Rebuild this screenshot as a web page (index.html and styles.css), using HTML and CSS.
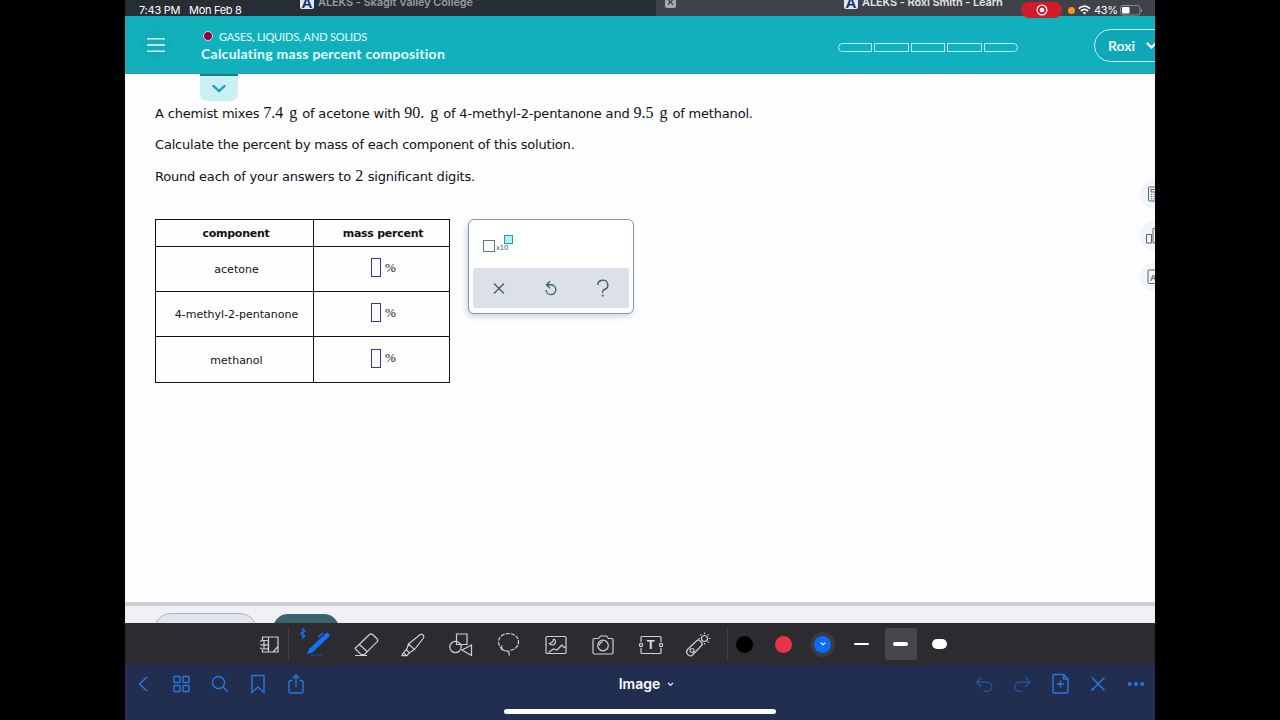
FILE: index.html
```html
<!DOCTYPE html>
<html lang="en">
<head>
    <meta charset="UTF-8">
    <meta name="viewport" content="width=device-width, initial-scale=1.0">
    <title>Calculating mass percent composition</title>
    <link rel="stylesheet" href="styles.css">
</head>
<body>
    <div class="screen">
        <div class="tabs">
            <div class="tab">
                <span class="time">7:43 PM</span>
                <span class="date">Mon Feb 8</span>
                <span class="logo">A</span>
                <span class="tab-title">ALEKS - Skagit Valley College</span>
            </div>
            <div class="tab tab-active">
                <svg class="close" width="11" height="11" viewBox="0 0 11 11"><rect y="-3" width="11" height="11" rx="2" fill="#a5a8ad"/><path d="M3 -.5l5 5M8 -.5l-5 5" stroke="#3f434a" stroke-width="1.3"/></svg>
                <span class="logo">A</span>
                <span class="tab-title title-active">ALEKS - Roxi Smith - Learn</span>
                <div class="record">
                    <svg width="12" height="12" viewBox="0 0 12 12"><circle cx="6" cy="6" r="4.9" fill="none" stroke="#fff" stroke-width="1.2"/><circle cx="6" cy="6" r="2.3" fill="#fff"/></svg>
                </div>
                <span class="mic-dot"></span>
                <svg class="wifi" width="13" height="10" viewBox="0 0 13 10" fill="none" stroke="#fff" stroke-width="1.7"><path d="M.8 3.7q5.7-5 11.4 0M2.9 6q3.6-3.1 7.2 0"/><path d="M6.5 9.4L4.7 7.6q1.8-1.3 3.6 0z" fill="#fff" stroke="none"/></svg>
                <span class="battery-text">43%</span>
                <svg class="battery" width="23" height="11" viewBox="0 0 23 11"><rect x=".5" y=".5" width="19.5" height="9.5" rx="2.5" fill="none" stroke="#8d9095"/><rect x="2" y="2" width="7.5" height="6.5" rx="1" fill="#fff"/><path d="M21.5 4v3" stroke="#8d9095"/></svg>
            </div>
        </div>

        <div class="header">
            <div class="menu">
                <svg width="18" height="16" viewBox="0 0 18 16" stroke="#e4fbfc" stroke-width="1.5"><path d="M0 1.7h18M0 8h18M0 14.3h18"/></svg>
            </div>
            <div class="heading">
                <div class="topic"><span class="dot"></span><span class="topic-text">GASES, LIQUIDS, AND SOLIDS</span></div>
                <div class="title">Calculating mass percent composition</div>
            </div>
            <div class="progress"><i></i><i></i><i></i><i></i><i></i></div>
            <div class="user">
                <span>Roxi</span>
                <svg width="11" height="8" viewBox="0 0 11 8"><path d="M1.5 1.5l4 4 4-4" fill="none" stroke="#fff" stroke-width="2.2" stroke-linecap="round"/></svg>
            </div>
        </div>

        <div class="page">
            <div class="question">
                <div class="pulldown">
                    <svg width="16" height="11" viewBox="0 0 16 11"><path d="M2.5 3L8 8.2 13.5 3" fill="none" stroke="#13a5b1" stroke-width="2.4" stroke-linecap="round"/></svg>
                </div>
                <p class="line1">A chemist mixes <span class="num">7.4&nbsp;</span><span class="num unit">g</span> of acetone with <span class="num">90.&nbsp;</span><span class="num unit">g</span> of 4-methyl-2-pentanone and <span class="num">9.5&nbsp;</span><span class="num unit">g</span> of methanol.</p>
                <p>Calculate the percent by mass of each component of this solution.</p>
                <p>Round each of your answers to <span class="num two">2</span> significant digits.</p>
                <div class="work">
                    <table>
                        <tr><th class="col-name">component</th><th>mass percent</th></tr>
                        <tr><td>acetone</td><td class="answer"><div><span class="box"></span>%</div></td></tr>
                        <tr><td>4-methyl-2-pentanone</td><td class="answer"><div><span class="box"></span>%</div></td></tr>
                        <tr class="last"><td>methanol</td><td class="answer"><div><span class="box"></span>%</div></td></tr>
                    </table>
                    <div class="palette">
                        <div class="sci">
                            <span class="mantissa"></span><span class="x10">x10</span><span class="exponent"></span>
                        </div>
                        <div class="keys">
                            <svg width="20" height="20" viewBox="0 0 20 20"><path d="M5 5.5l10 10M15 5.5l-10 10"/></svg>
                            <svg width="20" height="20" viewBox="0 0 20 20"><path d="M5.5 6.8h4.800a4.900 4.900 0 1 1-5.300 5.200M9 3.3L5.5 6.8l3.5 3.4"/></svg>
                            <svg width="20" height="20" viewBox="0 0 20 20"><path d="M4.800 7a5 4.800 0 1 1 6.700 4.500q-1.800.6-1.800 2v1.200"/><circle cx="9.700" cy="17.600" r=".4"/></svg>
                        </div>
                    </div>
                </div>
            </div>
            <div class="side">
                <div class="side-btn"><svg width="16" height="16" viewBox="0 0 16 16"><rect x="1.5" y="1" width="13" height="14" rx="1"/><path d="M4 3.5h8v2.500H4z"/><path d="M4 8.5h8M4 10.700h8M4 12.900h8" stroke-dasharray="1.3 1.3"/></svg></div>
                <div class="side-btn"><svg width="16" height="16" viewBox="0 0 16 16"><path d="M-.5 6.500h5V15h-5zM6 .5h5V15H6z"/></svg></div>
                <div class="side-btn"><svg width="16" height="16" viewBox="0 0 16 16"><rect x="1" y="1" width="14" height="13.5" rx="1"/></svg><span class="side-a">A</span></div>
            </div>
        </div>

        <div class="footer">
            <div class="btn-explain"></div>
            <div class="btn-check"></div>
        </div>

        <div class="toolbar">
            <svg class="tool-notes" width="28" height="28" viewBox="0 0 28 28"><path d="M7.5 10V7h15.500v15H7.500v-2M18 22l5-5.500M13.500 7v15"/><path d="M5.500 12q0-1.500 1.500-1.500h4.500q2 0 2 2v4.500q0 2-2 2H7q-1.500 0-1.500-1.500M5.500 14.800h8M9 10.500V19"/></svg>
            <div class="tools">
                <svg class="pen" width="38" height="36" viewBox="0 0 38 36">
                    <path d="M12.5 26L28 11.500" stroke="#0f74f6" stroke-width="5" stroke-linecap="round"/><path d="M10.500 24.500L7.500 30.500l6-2.500z" fill="#0f74f6" stroke="none"/><path d="M19 13.500l5-4.500" stroke="#0f74f6" stroke-width="1.5"/><path d="M11 31h12" stroke="#0c4ca0"/><path d="M1.500 8l4.500 4-2.300 2.200V5L6 7.200 1.500 11.200" stroke="#0f74f6" stroke-width="1.1"/>
                </svg>
                <svg width="28" height="28" viewBox="0 0 28 28"><path d="M4.500 16L17.500 3.500q1.500-1.400 3 0l4.500 4.300q1.500 1.500 0 3L12.500 23.500H9L3.500 18q-1-1 1-2zM7.500 13.500l8 7.500M3 24.500h12"/></svg>
                <svg width="28" height="28" viewBox="0 0 28 28"><path d="M9.500 13L21 3.700q1.500-1.200 3 .3t.5 3L15.500 18.500M9.500 13l-2 6 3 2.800 5-3.300zM7.500 18l-3 4 3.500 2.700 2.500-2.900M4 22l-1 2.700h5"/></svg>
                <svg width="28" height="28" viewBox="0 0 28 28"><path d="M9.500 3h10.500v10.500H9.500z"/><circle cx="8.500" cy="16" r="5.7"/><path d="M24.500 14v10.500L15 19z"/></svg>
                <svg width="28" height="28" viewBox="0 0 28 28"><path d="M8.500 19Q4.500 15 4.500 11C4.500 6 9 2.500 14.500 2.500S24.500 6 24.500 11s-4.500 8.500-10 8.500" stroke-dasharray="4 1.2"/><path d="M8 14.500q-1.500 5 4.500 5.500 3.500.5 2.500 4.500M12.500 20l3 1.500"/></svg>
                <svg width="28" height="28" viewBox="0 0 28 28"><rect x="4" y="5.500" width="20" height="17" rx="1"/><path d="M6.500 21.500l5-3.500 3.500 1 5-5 2 2.500 2-1M11.500 8q0 3.500-4 4.500 3 3 5.500 0Q14.500 9 11.500 8"/></svg>
                <svg width="28" height="28" viewBox="0 0 28 28"><path d="M5.500 7.500h4l2-2.500h6l2 2.500h3.500q1 0 1 1v13q0 1.500-1.500 1.500h-17Q4 23 4 21.500V9q0-1.500 1.500-1.500z"/><circle cx="14" cy="14.500" r="5.300"/><path d="M10.500 14.500q0-3.500 3.500-3.500"/></svg>
                <div class="text-tool">
                    <svg width="28" height="28" viewBox="0 0 28 28"><path d="M4 11V6.500Q4 5.500 5 5.500h18q1 0 1 1V11M4 17v4.500q0 1 1 1h18q1 0 1-1V17"/><circle cx="4" cy="14" r="1.6"/><circle cx="24" cy="14" r="1.6"/></svg>
                    <b>T</b>
                </div>
                <svg width="28" height="28" viewBox="0 0 28 28"><path d="M3.500 18.500L13 9.500q1.500-1.200 3 .3l1.500 1.700q1.500 1.500 0 3L8.500 24q-2 2-4.200-.2l-.8-.8q-2-2.200 0-4.500z"/><circle cx="8" cy="19.500" r="2"/><circle cx="20.500" cy="7.500" r="3"/><path d="M20.500 1.500v1.500M20.500 12v1.500M26.500 7.500H25M16 7.500h-1.500M16.300 3.300l1 1M24.700 3.300l-1 1M24.700 11.700l-1-1"/></svg>
            </div>
            <div class="swatches">
                <span><i class="color black"></i></span>
                <span><i class="color red"></i></span>
                <span><i class="color blue"><svg width="6" height="4" viewBox="0 0 6 4"><path d="M.7.7L3 2.700 5.300.7" fill="none" stroke="#fff" stroke-width="1.1"/></svg></i></span>
                <span><i class="stroke thin"></i></span>
                <span class="selected"><i class="stroke medium"></i></span>
                <span><i class="stroke thick"></i></span>
            </div>
        </div>

        <div class="bottombar">
            <div class="nav">
                <svg width="28" height="28" viewBox="0 0 28 28"><path d="M18 7l-7.500 7 7.500 7"/></svg>
                <svg width="28" height="28" viewBox="0 0 28 28"><rect x="7" y="6.5" width="6" height="6" rx=".6"/><rect x="16" y="6.5" width="6" height="6" rx=".6"/><rect x="7" y="15.5" width="6" height="6" rx=".6"/><rect x="16" y="15.5" width="6" height="6" rx=".6"/></svg>
                <svg width="28" height="28" viewBox="0 0 28 28"><circle cx="13.5" cy="12.5" r="6"/><path d="M18 17l4.800 4.700"/></svg>
                <svg width="28" height="28" viewBox="0 0 28 28"><path d="M9 5.500h12v17l-6-5.500-6 5.500z"/></svg>
                <svg width="28" height="28" viewBox="0 0 28 28"><path d="M11.500 10.500h-2Q8 10.500 8 12v9.500Q8 23 9.500 23h11q1.500 0 1.500-1.500V12q0-1.500-1.500-1.500h-2M15 17V5.500M11.500 8.500L15 5l3.500 3.500"/></svg>
            </div>
            <div class="doc-name">Image<svg width="7" height="5" viewBox="0 0 7 5"><path d="M1 1l2.500 2.300L6 1" fill="none" stroke="#fff" stroke-width="1.1"/></svg></div>
            <div class="nav nav-right">
                <svg class="dim" width="28" height="28" viewBox="0 0 28 28"><path d="M11.500 7L6.500 12l5 5M6.500 12h10.500a4.700 4.700 0 0 1 0 9.400h-3.500"/></svg>
                <svg class="dim" width="28" height="28" viewBox="0 0 28 28"><path d="M17 7l5 5-5 5M22 12H11.500a4.700 4.700 0 0 0 0 9.400H15"/></svg>
                <svg width="28" height="28" viewBox="0 0 28 28"><path d="M8.500 4.500h9L22 9v12.500q0 1.500-1.500 1.500h-12Q7 23 7 21.500V6q0-1.500 1.500-1.500zM17.500 4.500V9H22M14.500 10.500v7M11 14h7"/></svg>
                <svg width="28" height="28" viewBox="0 0 28 28"><path d="M8 7.500l12.500 13"/><path d="M20.500 7.500L9 19" stroke-width="1.5"/><path d="M9.500 18.500l-2 2" stroke-width="2.2"/></svg>
                <svg width="28" height="28" viewBox="0 0 28 28"><g fill="#2878dc" stroke="none"><circle cx="7.7" cy="14" r="1.9"/><circle cx="14" cy="14" r="1.9"/><circle cx="20.3" cy="14" r="1.9"/></g></svg>
            </div>
            <div class="home-bar"></div>
        </div>
    </div>
</body>
</html>
```
FILE: styles.css
```css
body {
    margin: 0;
    background-color: #000;
    font-family: "DejaVu Sans", sans-serif;
}
svg {
    display: block;
    flex: none;
}
p {
    margin: 0;
}
.screen {
    width: 1030px;
    height: 720px;
    margin: 0 auto;
    display: flex;
    flex-direction: column;
    overflow: hidden;
    background-color: #fefdff;
}

/* browser tabs and status icons */
.tabs {
    display: flex;
    height: 16px;
    font-family: Inter, sans-serif;
    font-size: 11px;
    color: #fff;
    white-space: nowrap;
}
.tab {
    display: flex;
    width: 531px;
    height: 16px;
    box-sizing: border-box;
    background-color: #272d34;
}
.tab-active {
    width: 499px;
    background-color: #3f4349;
}
.time {
    width: 50px;
    margin-left: 14px;
    line-height: 21px;
    letter-spacing: -0.25px;
}
.date {
    width: 111px;
    line-height: 21px;
    letter-spacing: -0.3px;
}
.logo {
    width: 14px;
    height: 9px;
    margin-right: 4px;
    overflow: hidden;
    background-color: #dfe6f4;
    color: #17306f;
    font: bold 15px/6px "Liberation Sans", sans-serif;
    text-align: center;
    border-radius: 0 0 2px 2px;
}
.tab-title {
    line-height: 5px;
    font-weight: 600;
    letter-spacing: -0.1px;
    color: #989ba0;
}
.title-active {
    width: 159px;
    color: #e3e4e6;
}
.close {
    margin-left: 9px;
    margin-right: 168px;
}
.record {
    display: flex;
    align-items: center;
    justify-content: center;
    width: 41px;
    height: 16px;
    margin-top: 2px;
    border-radius: 8px;
    background-color: #d21c2c;
    z-index: 1;
}
.mic-dot {
    width: 7px;
    height: 7px;
    margin: 7px 3px 0 6px;
    border-radius: 50%;
    background-color: #f6961e;
}
.wifi {
    margin-top: 5px;
}
.battery-text {
    width: 26px;
    margin-left: 3px;
    line-height: 21px;
    letter-spacing: -0.3px;
}
.battery {
    margin-top: 5px;
}

/* teal header */
.header {
    display: flex;
    height: 57px;
    background-color: #10b1bd;
    border-bottom: 1px solid #2aa3ae;
    color: #e9fcfd;
    font-family: Lato, sans-serif;
}
.menu {
    display: flex;
    align-items: center;
    justify-content: center;
    width: 30px;
    height: 30px;
    margin: 14px 30px 0 16px;
    border-radius: 50%;
    background-color: #10acb9;
}
.heading {
    width: 637px;
    padding-top: 12px;
}
.topic {
    display: flex;
    align-items: center;
    height: 16px;
    padding-left: 2px;
    font-size: 11px;
    letter-spacing: -0.15px;
    white-space: nowrap;
}
.dot {
    width: 8px;
    height: 8px;
    margin-right: 6px;
    border: 1px solid #e9d5e0;
    border-radius: 50%;
    background-color: #8a0042;
}
.title {
    font-size: 14px;
    font-weight: bold;
    line-height: 20px;
    letter-spacing: 0.26px;
}
.progress {
    display: flex;
    gap: 2px;
    width: 180px;
    height: 9px;
    margin-top: 27px;
}
.progress i {
    flex: 1;
    box-sizing: border-box;
    border: 1px solid #b9f1f4;
}
.progress i:first-child {
    border-radius: 5px 0 0 5px;
}
.progress i:last-child {
    border-radius: 0 5px 5px 0;
}
.user {
    display: flex;
    align-items: center;
    flex: none;
    width: 90px;
    height: 33px;
    margin: 13px -40px 0 76px;
    padding-left: 13px;
    box-sizing: border-box;
    border: 1px solid #c9f3f5;
    border-radius: 17px;
    background-color: #10a8b7;
    font-size: 14px;
    font-weight: bold;
}
.user span {
    width: 38px;
    margin-top: -1px;
}

/* question */
.page {
    display: flex;
    justify-content: space-between;
    height: 528px;
}
.question {
    padding-left: 30px;
    font-size: 13px;
    line-height: 31.5px;
    letter-spacing: -0.2px;
    color: #111;
    white-space: nowrap;
}
.pulldown {
    display: flex;
    align-items: center;
    justify-content: center;
    width: 38px;
    height: 25px;
    margin-left: 45px;
    margin-bottom: -3.5px;
    border-top: 2px solid #167f8c;
    border-radius: 0 0 7px 7px;
    background-color: #caf0f3;
}
.line1 {
    letter-spacing: -0.18px;
}
.num {
    font-family: "Liberation Serif", serif;
    font-size: 16px;
    line-height: 20px;
    letter-spacing: 0;
}
.unit {
    margin-left: 2px;
    margin-right: 1px;
}
.two {
    margin: 0 0.5px;
}
.work {
    display: flex;
    align-items: flex-start;
    gap: 18px;
    margin-top: 26.5px;
}
table {
    width: 295px;
    border-collapse: collapse;
    table-layout: fixed;
    font-size: 11px;
    line-height: 14px;
    letter-spacing: 0;
    text-align: center;
}
th, td {
    height: 41px;
    padding: 3px 0 0 4px;
    border: 1px solid #111;
}
th {
    height: 24px;
    padding: 2px 0 0 3px;
    letter-spacing: -0.25px;
}
.last td {
    height: 42px;
}
.col-name {
    width: 154px;
}
.answer {
    font-family: "Liberation Serif", serif;
    font-size: 13px;
}
.answer div {
    display: flex;
    align-items: center;
    justify-content: center;
    gap: 4px;
    margin-top: -5px;
}
.box {
    width: 8px;
    height: 17px;
    border: 1px solid #3a2fb5;
}
.palette {
    display: flex;
    flex-direction: column;
    justify-content: space-between;
    width: 166px;
    height: 95px;
    padding: 14px 4px 5px;
    box-sizing: border-box;
    border: 1px solid #7d9ba3;
    border-radius: 6px;
    background-color: #fff;
    box-shadow: -2px 3px 5px rgba(90, 110, 150, 0.25);
}
.sci {
    display: flex;
    align-items: flex-end;
    height: 18px;
    padding-left: 10px;
}
.mantissa {
    width: 10px;
    height: 10px;
    border: 1px solid #5c7a83;
}
.x10 {
    width: 12px;
    margin: 0 -4px -1px 1px;
    color: #3e5f69;
    font: 7px/10px "DejaVu Sans", sans-serif;
    letter-spacing: -0.3px;
}
.exponent {
    width: 7px;
    height: 7px;
    margin-bottom: 8px;
    border: 1px solid #1fa0a9;
    background-color: #b8edf0;
}
.keys {
    display: flex;
    align-items: center;
    justify-content: space-around;
    height: 40px;
    border-radius: 3px;
    background-color: #dce1e8;
}
.keys svg {
    fill: none;
    stroke: #3d626d;
    stroke-width: 1.4;
}
.side {
    display: flex;
    flex-direction: column;
    gap: 11.5px;
    width: 15px;
    padding-top: 105px;
}
.side-btn {
    position: relative;
    display: flex;
    align-items: center;
    width: 30px;
    height: 30px;
    padding-left: 7px;
    box-sizing: border-box;
    border-radius: 50%;
    background-color: #f3f5f9;
}
.side-btn svg {
    fill: none;
    stroke: #4b6972;
    overflow: visible;
}
.side-a {
    position: absolute;
    left: 10px;
    top: 11px;
    font: bold 9px/10px "Liberation Sans", sans-serif;
    color: #58747c;
}
.footer {
    display: flex;
    gap: 16px;
    flex: none;
    height: 21px;
    padding: 7px 0 0 29px;
    box-sizing: border-box;
    border-top: 4px solid #cdced6;
    background-color: #f0f0f5;
    overflow: hidden;
}
.btn-explain {
    width: 101px;
    height: 34px;
    border: 1px solid #aeb3bd;
    border-radius: 17px;
    background-color: #e1e5ed;
}
.btn-check {
    width: 66px;
    height: 34px;
    margin-top: 1px;
    border-radius: 15px;
    background-color: #38666c;
}

/* drawing tools */
.toolbar {
    display: flex;
    align-items: center;
    height: 42px;
    background-color: #2d2b2f;
    z-index: 1;
}
.toolbar svg {
    fill: none;
    stroke: #d0d0d2;
    stroke-width: 1.2;
}
.tool-notes {
    margin-left: 130px;
    margin-right: 5px;
}
.tools {
    display: grid;
    grid-template-columns: repeat(9, 47.5px);
    align-items: center;
    justify-items: center;
    width: 440px;
    height: 32px;
    padding: 1px 0 0 5.5px;
    box-sizing: border-box;
    border-left: 1px solid #424146;
    border-right: 1px solid #424146;
}
.tools .pen {
    margin-top: -5px;
}
.text-tool {
    position: relative;
}
.text-tool b {
    position: absolute;
    left: 0;
    top: 7px;
    width: 28px;
    color: #dededf;
    font: bold 13px/14px "Liberation Sans", sans-serif;
    text-align: center;
}
.swatches {
    display: flex;
    align-items: center;
    margin-left: -3px;
}
.swatches span {
    display: flex;
    align-items: center;
    justify-content: center;
    width: 39px;
    height: 32px;
}
.swatches .selected {
    width: 32px;
    margin: 0 3.5px;
    border-radius: 3px;
    background-color: #46454c;
}
.color {
    display: flex;
    align-items: center;
    justify-content: center;
    width: 17px;
    height: 17px;
    border-radius: 50%;
}
.black {
    background-color: #000;
}
.red {
    background-color: #e73349;
}
.blue {
    background-color: #0a6cfb;
    box-shadow: 0 0 0 4px #3a3a40;
}
.stroke {
    width: 15px;
    border-radius: 8px;
    background-color: #fff;
}
.thin {
    height: 2px;
}
.medium {
    height: 4px;
}
.thick {
    height: 10px;
}

/* bottom navigation */
.bottombar {
    position: relative;
    display: flex;
    justify-content: space-between;
    height: 55px;
    padding: 5px 0 0 4px;
    box-sizing: border-box;
    background-color: #222e50;
}
.nav {
    display: flex;
    gap: 10px;
}
.nav svg {
    fill: none;
    stroke: #2878dc;
    stroke-width: 1.4;
}
.nav-right {
    margin-right: 5px;
}
.nav .dim {
    stroke: #1f559c;
}
.doc-name {
    display: flex;
    align-items: center;
    gap: 7px;
    height: 28px;
    margin-left: 14px;
    color: #fff;
    font: 600 14px/28px Inter, sans-serif;
}
.home-bar {
    position: absolute;
    left: 379px;
    bottom: 6px;
    width: 272px;
    height: 5px;
    border-radius: 3px;
    background-color: #fff;
}
```
